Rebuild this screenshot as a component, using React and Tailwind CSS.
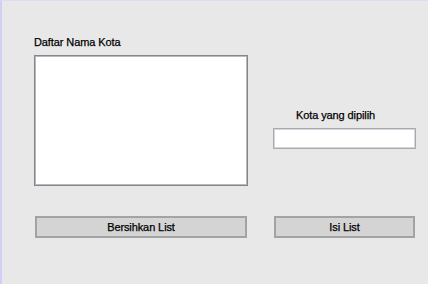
export default function App() {
  return (
    <div className="w-[428px] h-[284px] overflow-hidden bg-[#e8e8e8] border-l-[2px] border-l-[#cfcff8] border-t border-t-[#dcdcf6] font-['Liberation_Sans',Arial,sans-serif] text-[11px] leading-[13px] text-black [-webkit-text-stroke:0.25px_#000] tracking-[-0.1px]">
      <div className="flex pt-[35px] pl-[32px]">
        <div className="w-[214px]">
          <div className="h-[13px]">Daftar Nama Kota</div>
          <div className="mt-[6px] h-[131px] bg-white border border-[#85868d] shadow-[inset_0_0_0_1px_#b9b9bd]" />
        </div>
        <div className="ml-[25px] w-[143px] pt-[73px]">
          <div className="h-[13px] pl-[23px]">Kota yang dipilih</div>
          <div className="mt-[6px] h-[21px] bg-white border border-[#a9a9b1] shadow-[inset_0_0_0_1px_#d6d6da]" />
        </div>
      </div>
      <div className="flex mt-[30px] pl-[33px]">
        <button className="w-[212px] h-[22px] bg-[#d4d4d4] border-2 border-[#a3a3a3] text-[11px] leading-[13px] text-black">
          Bersihkan List
        </button>
        <button className="ml-[27px] w-[141px] h-[22px] bg-[#d4d4d4] border-2 border-[#a3a3a3] text-[11px] leading-[13px] text-black">
          Isi List
        </button>
      </div>
    </div>
  );
}
